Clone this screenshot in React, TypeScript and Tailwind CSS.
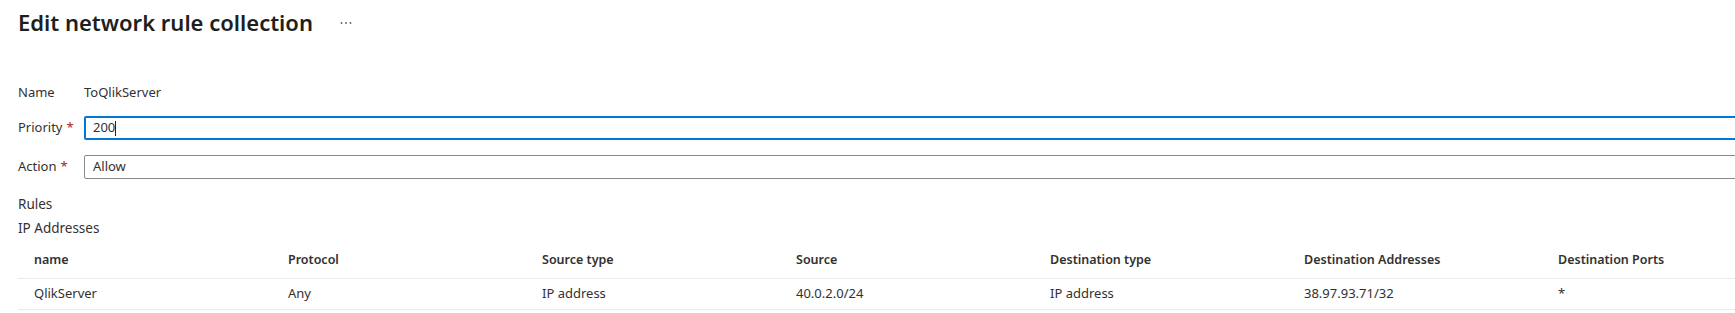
import React from 'react';

const font = { fontFamily: '"Segoe UI", "Noto Sans", "Open Sans", sans-serif' };

const columns = [
  'name',
  'Protocol',
  'Source type',
  'Source',
  'Destination type',
  'Destination Addresses',
  'Destination Ports',
];

const rules = [
  ['QlikServer', 'Any', 'IP address', '40.0.2.0/24', 'IP address', '38.97.93.71/32', '*'],
];

function Required() {
  return <span className="ml-[4px] text-[#a4262c]">*</span>;
}

function MoreDots() {
  return (
    <svg width="12" height="4" viewBox="0 0 12 4" className="text-[#605e5c]">
      <circle cx="1.5" cy="2" r="0.9" fill="currentColor" />
      <circle cx="6" cy="2" r="0.9" fill="currentColor" />
      <circle cx="10.5" cy="2" r="0.9" fill="currentColor" />
    </svg>
  );
}

export default function App() {
  return (
    <div
      className="w-[1735px] h-[313px] overflow-hidden bg-white text-[#323130]"
      style={font}
    >
      <div className="flex items-center pl-[18px] pt-[7px] h-[36px]">
        <h1 className="text-[22px] leading-[30px] font-semibold text-[#201f1e]">
          Edit network rule collection
        </h1>
        <div className="ml-[27px] mt-[2px]">
          <MoreDots />
        </div>
      </div>

      <div className="mt-[45px] pl-[18px] w-[1760px] text-[13px]">
        <div className="flex items-center h-[24px]">
          <div className="w-[66px]">Name</div>
          <div>ToQlikServer</div>
        </div>

        <div className="flex items-center h-[24px] mt-[11px]">
          <div className="w-[66px]">
            Priority
            <Required />
          </div>
          <div className="flex-1 h-[24px] border-2 border-[#0078d4] rounded-[2px] flex items-center pl-[7px]">
            <span>200</span>
            <span className="w-px h-[15px] bg-[#201f1e]" />
          </div>
        </div>

        <div className="flex items-center h-[24px] mt-[15px]">
          <div className="w-[66px]">
            Action
            <Required />
          </div>
          <div className="flex-1 h-[24px] border border-[#8a8886] rounded-[2px] flex items-center pl-[8px]">
            Allow
          </div>
        </div>

        <div className="mt-[13px] text-[13.5px] leading-[24px]">Rules</div>
        <div className="text-[13.5px] leading-[24px]">IP Addresses</div>

        <div className="w-[1778px]">
          <div className="grid grid-cols-[repeat(7,254px)] h-[39px] border-b border-[#edebe9] items-center pt-[2px] font-semibold text-[12.5px]">
            {columns.map((c) => (
              <div key={c} className="pl-[16px] whitespace-nowrap">
                {c}
              </div>
            ))}
          </div>
          {rules.map((r) => (
            <div
              key={r[0]}
              className="grid grid-cols-[repeat(7,254px)] h-[31px] border-b border-[#edebe9] items-center"
            >
              {r.map((v, i) => (
                <div key={i} className="pl-[16px] whitespace-nowrap">
                  {v}
                </div>
              ))}
            </div>
          ))}
        </div>
      </div>
    </div>
  );
}
